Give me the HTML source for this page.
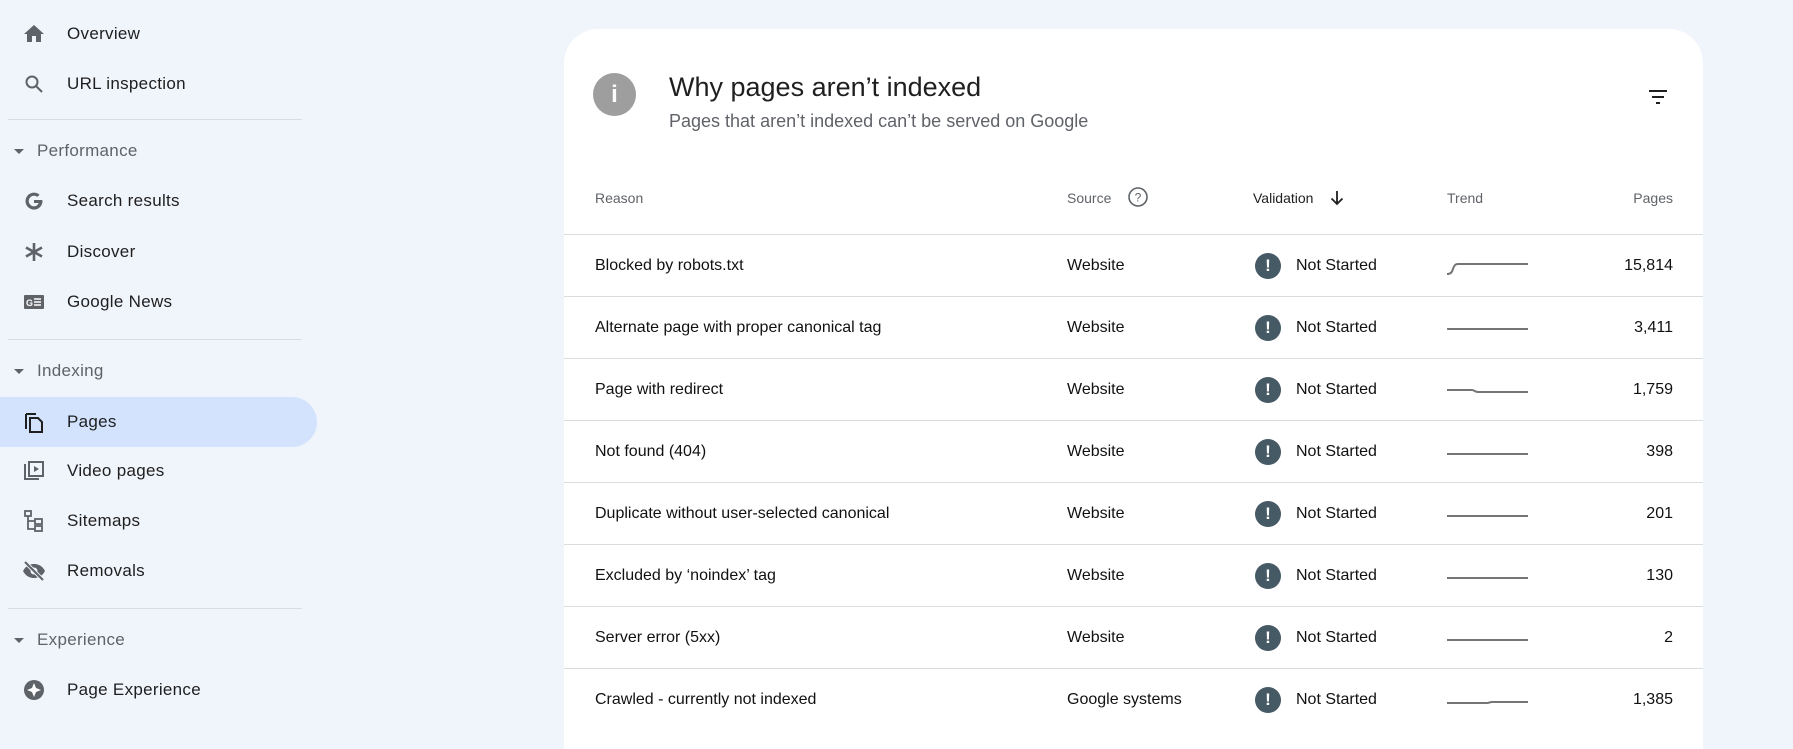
<!DOCTYPE html>
<html><head><meta charset="utf-8"><style>
*{margin:0;padding:0;box-sizing:border-box}
body{width:1793px;height:721px;overflow:hidden;background:#f0f4fb;font-family:"Liberation Sans",sans-serif;color:#1f1f1f;position:relative}
.nav{position:absolute;left:0;height:50px;width:317px;display:flex;align-items:center;font-size:17px;letter-spacing:0.3px;color:#1f1f1f}
.nav svg{position:absolute;left:22px;width:24px;height:24px}
.nav span{position:absolute;left:67px}
.sel{background:#d3e3fd;border-radius:0 25px 25px 0}
.hdr{position:absolute;left:0;height:30px;display:flex;align-items:center;font-size:17px;color:#5f6368;letter-spacing:0.3px}
.hdr:before{content:"";position:absolute;left:14px;top:13px;border:5px solid transparent;border-top:5px solid #5f6368}
.hdr span{position:absolute;left:37px;white-space:nowrap}
.div{position:absolute;left:8px;width:294px;height:1px;background:#dadce0}
.card{position:absolute;left:564px;top:29px;width:1139px;height:720px;background:#fff;border-radius:34px 34px 0 0}
.th{position:absolute;top:161px;font-size:14px;color:#5f6368}
.row{position:absolute;left:0;width:1139px;height:62px;border-top:1px solid #dadce0;font-size:16px;color:#111}
.row>div{position:absolute;top:0;height:61px;display:flex;align-items:center;white-space:nowrap}
.c1{left:31px}.c2{left:503px}.c3{left:691px}
.bang{width:26px;height:26px;border-radius:50%;background:#455a64;color:#fff;font-weight:bold;font-size:17px;display:flex;align-items:center;justify-content:center;margin-right:15px}
.c5{right:30px}
.c4{left:883px}
</style></head><body>

<div class="nav" style="top:9px"><svg viewBox="0 0 24 24"><path d="M10 20v-6h4v6h5v-8h3L12 3 2 12h3v8z" fill="#5f6368"/></svg><span>Overview</span></div>
<div class="nav" style="top:59px"><svg viewBox="0 0 24 24"><circle cx="10" cy="10" r="5.5" fill="none" stroke="#5f6368" stroke-width="2"/><path d="M14 14l6 6" stroke="#5f6368" stroke-width="2"/></svg><span>URL inspection</span></div>
<div class="div" style="top:119px"></div>
<div class="hdr" style="top:136px"><span>Performance</span></div>
<div class="nav" style="top:176px"><svg viewBox="0 0 24 24"><path d="M20 11h-8v3h4.6c-.6 2-2.4 3.3-4.6 3.3a5.3 5.3 0 1 1 3.4-9.4l2.2-2.2A8.5 8.5 0 1 0 20.5 12c0-.3 0-.7-.5-1z" fill="#5f6368"/></svg><span>Search results</span></div>
<div class="nav" style="top:227px"><svg viewBox="0 0 24 24"><path d="M12 3v18M4 7.5l16 9M4 16.5l16-9" stroke="#5f6368" stroke-width="2.6"/></svg><span>Discover</span></div>
<div class="nav" style="top:277px"><svg viewBox="0 0 24 24"><rect x="2" y="5" width="20" height="14" rx="1" fill="#5f6368"/><text x="4" y="16" font-size="9" font-weight="bold" fill="#fff" font-family="Liberation Sans">G</text><path d="M12 9h7M12 12h7M12 15h7" stroke="#fff" stroke-width="1.4"/></svg><span>Google News</span></div>
<div class="div" style="top:339px"></div>
<div class="hdr" style="top:356px"><span>Indexing</span></div>
<div class="nav sel" style="top:397px"><svg viewBox="0 0 24 24"><path d="M4 4v15M4 4h10" stroke="#1f1f1f" stroke-width="2" fill="none"/><path d="M8 8h8l4 4v10H8z" stroke="#1f1f1f" stroke-width="2" fill="none"/></svg><span>Pages</span></div>
<div class="nav" style="top:446px"><svg viewBox="0 0 24 24"><path d="M3 5v15h14" stroke="#5f6368" stroke-width="2" fill="none"/><rect x="7" y="3" width="14" height="14" stroke="#5f6368" stroke-width="2" fill="none"/><path d="M12 7l5 3-5 3z" fill="#5f6368"/></svg><span>Video pages</span></div>
<div class="nav" style="top:496px"><svg viewBox="0 0 24 24"><rect x="3" y="2" width="6" height="5" fill="none" stroke="#5f6368" stroke-width="1.8"/><rect x="13" y="10" width="7" height="5" fill="none" stroke="#5f6368" stroke-width="1.8"/><rect x="13" y="17" width="7" height="5" fill="none" stroke="#5f6368" stroke-width="1.8"/><path d="M6 7v13h7M6 12h7" stroke="#5f6368" stroke-width="1.8" fill="none"/></svg><span>Sitemaps</span></div>
<div class="nav" style="top:546px"><svg viewBox="0 0 24 24"><path d="M1 12c3-6 8-7 11-7s8 1 11 7c-3 6-8 7-11 7S4 18 1 12z" fill="#5f6368"/><circle cx="12" cy="12" r="3.5" fill="#f0f4fb"/><path d="M3 3l18 18" stroke="#f0f4fb" stroke-width="4"/><path d="M3 3l18 18" stroke="#5f6368" stroke-width="2"/></svg><span>Removals</span></div>
<div class="div" style="top:608px"></div>
<div class="hdr" style="top:625px"><span>Experience</span></div>
<div class="nav" style="top:665px"><svg viewBox="0 0 24 24"><circle cx="12" cy="12" r="10" fill="#5f6368"/><path d="M12 5l2 5 5 2-5 2-2 5-2-5-5-2 5-2z" fill="#fff"/></svg><span>Page Experience</span></div>

<div class="card">
  <div style="position:absolute;left:29px;top:44px;width:43px;height:43px;border-radius:50%;background:#9e9e9e;color:#fff;font-weight:bold;font-size:24px;text-align:center;line-height:43px">i</div>
  <div style="position:absolute;left:105px;top:43px;font-size:27px;color:#1f1f1f">Why pages aren’t indexed</div>
  <div style="position:absolute;left:105px;top:82px;font-size:18px;color:#5f6368">Pages that aren’t indexed can’t be served on Google</div>
  <svg style="position:absolute;left:1082px;top:56px" width="24" height="24" viewBox="0 0 24 24"><path d="M3 6h18M6 12h12M10 18h4" stroke="#1f1f1f" stroke-width="2"/></svg>
  <div class="th" style="left:31px">Reason</div>
  <div class="th" style="left:503px">Source</div>
  <svg style="position:absolute;left:563px;top:157px" width="22" height="22" viewBox="0 0 22 22"><circle cx="11" cy="11" r="9" fill="none" stroke="#5f6368" stroke-width="1.6"/><text x="11" y="15.5" text-anchor="middle" font-size="12" fill="#5f6368" font-family="Liberation Sans">?</text></svg>
  <div class="th" style="left:689px;color:#1f1f1f">Validation</div>
  <svg style="position:absolute;left:764px;top:160px" width="18" height="18" viewBox="0 0 18 18"><path d="M9 2v13M3.5 9.5L9 15l5.5-5.5" stroke="#1f1f1f" stroke-width="1.8" fill="none"/></svg>
  <div class="th" style="left:883px">Trend</div>
  <div class="th" style="right:30px">Pages</div>

  <div class="row" style="top:205px"><div class="c1">Blocked by robots.txt</div><div class="c2">Website</div><div class="c3"><span class="bang">!</span>Not Started</div><div class="c4"><svg width="82" height="30"><path d="M0 23c4 0 5-2 6-5s2-5 5-5h70" stroke="#757575" stroke-width="2" fill="none"/></svg></div><div class="c5">15,814</div></div>
  <div class="row" style="top:267px"><div class="c1">Alternate page with proper canonical tag</div><div class="c2">Website</div><div class="c3"><span class="bang">!</span>Not Started</div><div class="c4"><svg width="82" height="30"><path d="M0 15c0 1 1 1 3 1h78" stroke="#757575" stroke-width="2" fill="none"/></svg></div><div class="c5">3,411</div></div>
  <div class="row" style="top:329px"><div class="c1">Page with redirect</div><div class="c2">Website</div><div class="c3"><span class="bang">!</span>Not Started</div><div class="c4"><svg width="82" height="30"><path d="M0 15h25c2 0 3 2 6 2h50" stroke="#757575" stroke-width="2" fill="none"/></svg></div><div class="c5">1,759</div></div>
  <div class="row" style="top:391px"><div class="c1">Not found (404)</div><div class="c2">Website</div><div class="c3"><span class="bang">!</span>Not Started</div><div class="c4"><svg width="82" height="30"><path d="M0 17h81" stroke="#757575" stroke-width="2" fill="none"/></svg></div><div class="c5">398</div></div>
  <div class="row" style="top:453px"><div class="c1">Duplicate without user-selected canonical</div><div class="c2">Website</div><div class="c3"><span class="bang">!</span>Not Started</div><div class="c4"><svg width="82" height="30"><path d="M0 17h81" stroke="#757575" stroke-width="2" fill="none"/></svg></div><div class="c5">201</div></div>
  <div class="row" style="top:515px"><div class="c1">Excluded by ‘noindex’ tag</div><div class="c2">Website</div><div class="c3"><span class="bang">!</span>Not Started</div><div class="c4"><svg width="82" height="30"><path d="M0 17h81" stroke="#757575" stroke-width="2" fill="none"/></svg></div><div class="c5">130</div></div>
  <div class="row" style="top:577px"><div class="c1">Server error (5xx)</div><div class="c2">Website</div><div class="c3"><span class="bang">!</span>Not Started</div><div class="c4"><svg width="82" height="30"><path d="M0 17h81" stroke="#757575" stroke-width="2" fill="none"/></svg></div><div class="c5">2</div></div>
  <div class="row" style="top:639px"><div class="c1">Crawled - currently not indexed</div><div class="c2">Google systems</div><div class="c3"><span class="bang">!</span>Not Started</div><div class="c4"><svg width="82" height="30"><path d="M0 18h40c2 0 3-1 5-1h36" stroke="#757575" stroke-width="2" fill="none"/></svg></div><div class="c5">1,385</div></div>
</div>
</body></html>
